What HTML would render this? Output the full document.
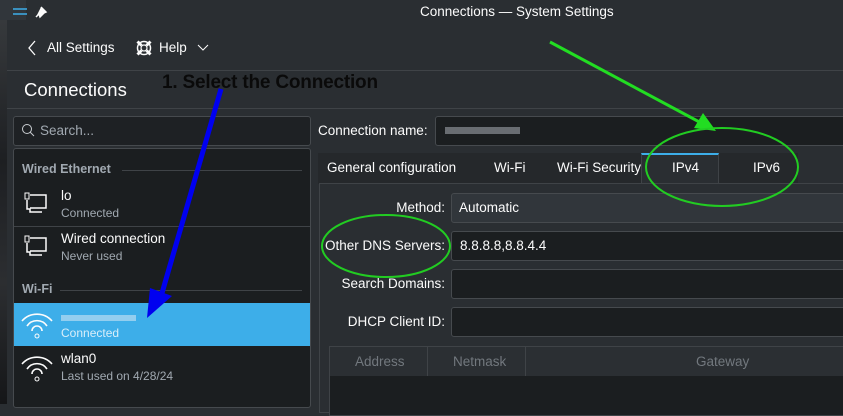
<!DOCTYPE html>
<html><head><meta charset="utf-8"><style>
*{margin:0;padding:0;box-sizing:border-box}
body{width:843px;height:404px;overflow:hidden;background:#2a2e32;font-family:"Liberation Sans","DejaVu Sans",sans-serif;color:#fcfcfc;position:relative;font-size:13.5px}
.a{position:absolute;white-space:nowrap}
.field{position:absolute;background:#1b1e20;border:1px solid #464a4e;border-radius:3px}
.lbl{position:absolute;text-align:right;width:140px;font-size:13.5px}
.g{color:#a1a9b1}
</style></head><body>
<div class="a" style="left:0;top:0;width:7px;height:404px;background:linear-gradient(#3a3d40,#1d1f22 40%,#2c2e31 70%,#151618)"></div>
<div class="a" style="left:7px;top:0;width:836px;height:24px;background:#2a2e32"></div>
<div class="a" style="left:0;top:0;width:26px;height:20px;background:#31363b"></div>
<svg class="a" style="left:10px;top:3px" width="40" height="16"><path d="M3 6h14M3 11h14" stroke="#3daee9" stroke-width="1.5"/><path d="M31 4l5 5-2 1-4 4 -1-3-3 3" stroke="#fcfcfc" stroke-width="1.5" fill="#fcfcfc"/></svg>
<div class="a" style="left:420px;top:4px;font-size:13.5px">Connections — System Settings</div>
<svg class="a" style="left:26px;top:39px" width="12" height="18"><path d="M9 2L3 9l6 7" stroke="#fcfcfc" stroke-width="1.3" fill="none"/></svg>
<div class="a" style="left:47px;top:40px">All Settings</div>
<svg class="a" style="left:135px;top:39px" width="18" height="18"><circle cx="9" cy="9" r="6.5" stroke="#fcfcfc" stroke-width="1.5" fill="none"/><circle cx="9" cy="9" r="3" stroke="#fcfcfc" stroke-width="1.2" fill="none"/><path d="M2.5 2.5L6.5 6.5M15.5 2.5L11.5 6.5M2.5 15.5L6.5 11.5M15.5 15.5L11.5 11.5" stroke="#fcfcfc" stroke-width="3"/></svg>
<div class="a" style="left:159px;top:40px">Help</div>
<svg class="a" style="left:197px;top:44px" width="12" height="8"><path d="M1 1l5 5 5-5" stroke="#fcfcfc" fill="none"/></svg>
<div class="a" style="left:7px;top:70px;width:836px;height:1px;background:#3f4347"></div>
<div class="a" style="left:24px;top:79px;font-size:18.5px">Connections</div>
<div class="a" style="left:7px;top:108px;width:836px;height:1px;background:#3f4347"></div>
<div class="field" style="left:13px;top:116px;width:298px;height:30px;background:#1e2124"></div>
<svg class="a" style="left:21px;top:123px" width="14" height="14"><circle cx="6" cy="6" r="4.5" stroke="#c8ccd0" fill="none"/><path d="M9 9l4 4" stroke="#c8ccd0"/></svg>
<div class="a g" style="left:40px;top:123px">Search...</div>
<div class="field" style="left:13px;top:148px;width:298px;height:260px"></div>
<div class="a g" style="left:22px;top:162px;font-weight:bold;font-size:12.5px">Wired Ethernet</div>
<div class="a" style="left:122px;top:170px;width:180px;height:1px;background:#3f4347"></div>
<svg class="a" style="left:23px;top:191px" width="26" height="24"><rect x="2" y="2" width="4" height="6" stroke="#fcfcfc" fill="none"/><path d="M7 4h16v13H7M4 9v9h3v3h12" stroke="#fcfcfc" stroke-width="1.5" fill="none"/></svg>
<div class="a" style="left:61px;top:188px">lo</div>
<div class="a g" style="left:61px;top:206px;font-size:12px">Connected</div>
<div class="a" style="left:14px;top:226px;width:296px;height:1px;background:#3f4347"></div>
<svg class="a" style="left:23px;top:234px" width="26" height="24"><rect x="2" y="2" width="4" height="6" stroke="#fcfcfc" fill="none"/><path d="M7 4h16v13H7M4 9v9h3v3h12" stroke="#fcfcfc" stroke-width="1.5" fill="none"/></svg>
<div class="a" style="left:61px;top:231px">Wired connection</div>
<div class="a g" style="left:61px;top:249px;font-size:12px">Never used</div>
<div class="a g" style="left:22px;top:282px;font-weight:bold;font-size:12.5px">Wi-Fi</div>
<div class="a" style="left:60px;top:290px;width:242px;height:1px;background:#3f4347"></div>
<div class="a" style="left:14px;top:303px;width:296px;height:43px;background:#3daee9"></div>
<svg class="a" style="left:20px;top:311px" width="34" height="28"><path d="M2 10a20 20 0 0 1 30 0M7 15a12 12 0 0 1 20 0M12 20a5 5 0 0 1 10 0" stroke="#fcfcfc" stroke-width="1.6" fill="none"/><circle cx="17" cy="25" r="2" stroke="#fcfcfc" fill="none"/></svg>
<div class="a" style="left:61px;top:315px;width:75px;height:6px;background:#a9d6f0;opacity:.8"></div>
<div class="a" style="left:61px;top:326px;font-size:12px;color:#d9eefa">Connected</div>
<svg class="a" style="left:20px;top:354px" width="34" height="28"><path d="M2 10a20 20 0 0 1 30 0M7 15a12 12 0 0 1 20 0M12 20a5 5 0 0 1 10 0" stroke="#fcfcfc" stroke-width="1.6" fill="none"/><circle cx="17" cy="25" r="2" stroke="#fcfcfc" fill="none"/></svg>
<div class="a" style="left:61px;top:351px">wlan0</div>
<div class="a g" style="left:61px;top:369px;font-size:12px">Last used on 4/28/24</div>
<div class="a" style="left:318px;top:123px">Connection name:</div>
<div class="field" style="left:435px;top:116px;width:420px;height:30px"></div>
<div class="a" style="left:445px;top:127px;width:75px;height:7px;background:#8a8f96;opacity:.7"></div>
<div class="a" style="left:318px;top:153px;width:480px;height:31px;background:#25282b"></div>
<div class="a" style="left:327px;top:160px">General configuration</div>
<div class="a" style="left:494px;top:160px">Wi-Fi</div>
<div class="a" style="left:557px;top:160px">Wi-Fi Security</div>
<div class="a" style="left:641px;top:153px;width:78px;height:31px;background:#2a2e32;border:1px solid #3f4347;border-bottom:none;border-top:2px solid #3daee9"></div>
<div class="a" style="left:672px;top:160px">IPv4</div>
<div class="a" style="left:753px;top:160px">IPv6</div>
<div class="a" style="left:319px;top:183px;width:530px;height:230px;border:1px solid #3f4347;background:#2a2e32"></div>
<div class="lbl" style="left:305px;top:200px">Method:</div>
<div class="field" style="left:451px;top:193px;width:400px;height:30px;background:#31363b"></div>
<div class="a" style="left:459px;top:200px">Automatic</div>
<div class="lbl" style="left:305px;top:238px">Other DNS Servers:</div>
<div class="field" style="left:451px;top:231px;width:400px;height:30px"></div>
<div class="a" style="left:460px;top:238px">8.8.8.8,8.8.4.4</div>
<div class="lbl" style="left:305px;top:276px">Search Domains:</div>
<div class="field" style="left:451px;top:269px;width:400px;height:30px"></div>
<div class="lbl" style="left:305px;top:314px">DHCP Client ID:</div>
<div class="field" style="left:451px;top:307px;width:400px;height:30px"></div>
<div class="a" style="left:329px;top:346px;width:520px;height:70px;background:#1b1e20;border:1px solid #3f4347"></div>
<div class="a" style="left:330px;top:347px;width:520px;height:29px;background:#2b2f33"></div>
<div class="a" style="left:427px;top:347px;width:1px;height:29px;background:#3f4347"></div>
<div class="a" style="left:525px;top:347px;width:1px;height:29px;background:#3f4347"></div>
<div class="a" style="left:355px;top:354px;color:#72787e">Address</div>
<div class="a" style="left:453px;top:354px;color:#72787e">Netmask</div>
<div class="a" style="left:696px;top:354px;color:#72787e">Gateway</div>
<div class="a" style="left:162px;top:72px;font-size:19px;font-weight:bold;color:#0a0a0a;letter-spacing:-0.2px">1. Select the Connection</div>
<svg class="a" style="left:0;top:0" width="843" height="404">
<path d="M221 89L160 300" stroke="#0000f0" stroke-width="5"/>
<path d="M147 318L150 288L172 296Z" fill="#0000f0"/>
<path d="M550 42L705 125" stroke="#22dd22" stroke-width="3"/>
<path d="M716 131L694 128L703 113Z" fill="#22dd22"/>
<ellipse cx="722" cy="167" rx="76" ry="39" stroke="#22cc22" stroke-width="2" fill="none"/>
<ellipse cx="386" cy="246" rx="64" ry="31" stroke="#22cc22" stroke-width="2" fill="none"/>
</svg>
</body></html>
